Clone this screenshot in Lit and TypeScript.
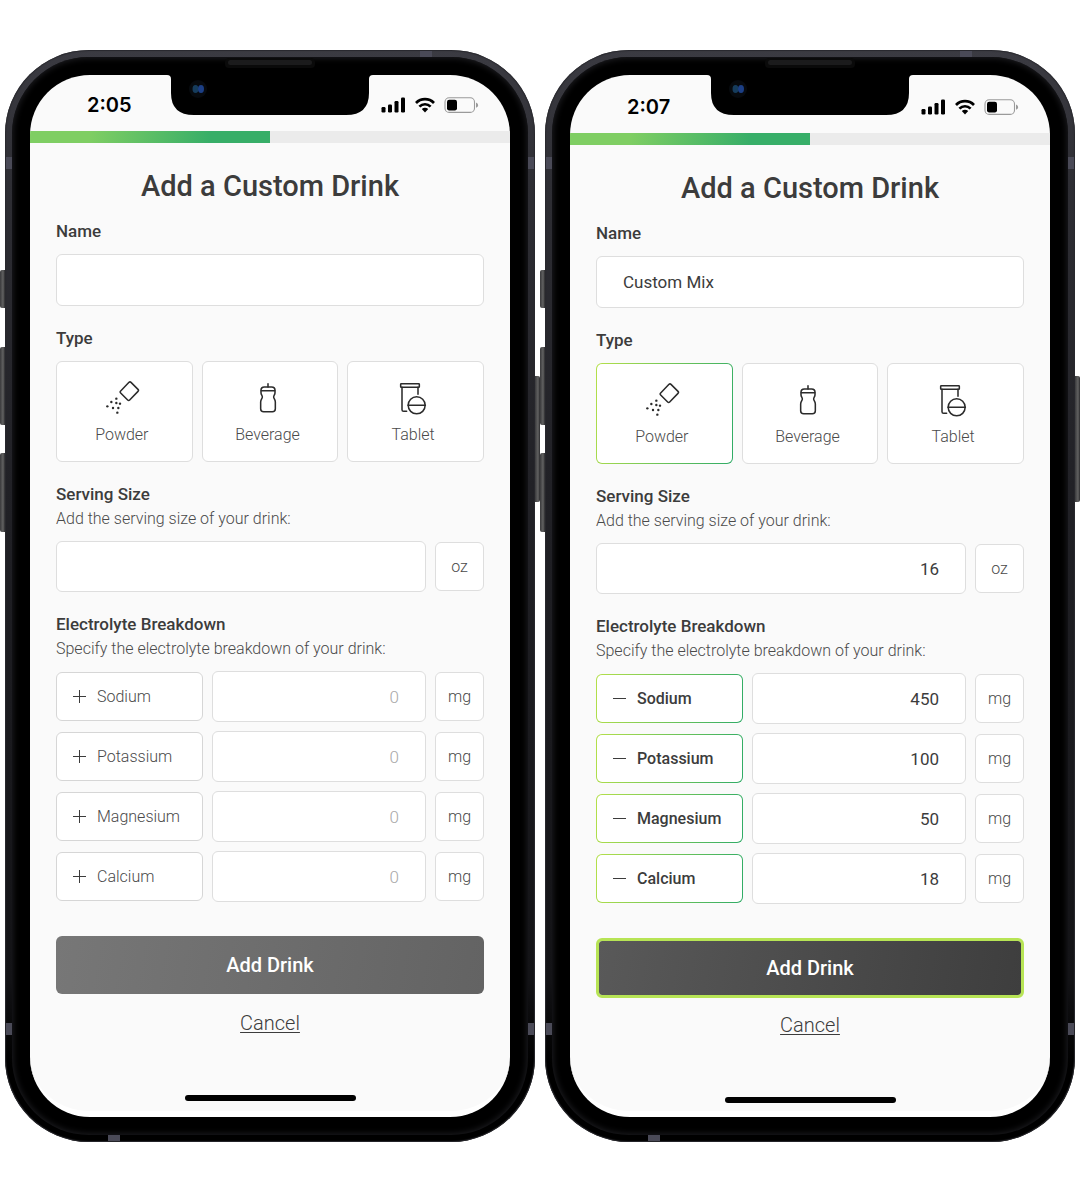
import { LitElement, html, svg, css, nothing } from "lit";
import { customElement, property, state } from "lit/decorators.js";
import { classMap } from "lit/directives/class-map.js";

interface Mineral {
  name: string;
  amount: string;
}

interface Drink {
  time: string;
  name: string;
  type: string;
  serving: string;
  minerals: Mineral[];
}

const emptyDrink: Drink = {
  time: "2:05",
  name: "",
  type: "",
  serving: "",
  minerals: [
    { name: "Sodium", amount: "" },
    { name: "Potassium", amount: "" },
    { name: "Magnesium", amount: "" },
    { name: "Calcium", amount: "" },
  ],
};

const filledDrink: Drink = {
  time: "2:07",
  name: "Custom Mix",
  type: "Powder",
  serving: "16",
  minerals: [
    { name: "Sodium", amount: "450" },
    { name: "Potassium", amount: "100" },
    { name: "Magnesium", amount: "50" },
    { name: "Calcium", amount: "18" },
  ],
};

const powderDots = [
  [200, 146], [185, 156], [200, 159], [211, 161],
  [173, 169], [190, 174], [206, 174], [203, 188],
];

const types = [
  {
    name: "Powder",
    box: "163 90 108 108",
    art: svg`
      <path d="M238 97 Q241 94 244 97 L265 118 Q268 121 265 124 L240 150 Q237 153 234 150 L213 129 Q210 126 213 123 Z"/>
      ${powderDots.map(([x, y]) => svg`<circle class="dot" cx=${x} cy=${y} r="3.6"/>`)}`,
  },
  {
    name: "Beverage",
    box: "599 90 108 108",
    art: svg`
      <path d="M656 101 V111 M636 122 H676"/>
      <path d="M635 128 V121 Q635 111 645 111 H667 Q677 111 677 121 V128 C677 135 673 136 673 141 C673 146 678 148 678 156 V176 Q678 185 669 185 H643 Q634 185 634 176 V156 C634 148 639 146 639 141 C639 136 635 135 635 128 Z"/>`,
  },
  {
    name: "Tablet",
    box: "1036 90 108 108",
    art: svg`
      <rect x="1053" y="101" width="56" height="11" rx="2"/>
      <path d="M1057 112 V179 Q1057 184 1062 184 H1071 M1105 112 V133"/>
      <circle cx="1101" cy="166" r="25.5"/>
      <path d="M1075 166 H1127"/>`,
  },
];

@customElement("drink-form")
export class DrinkForm extends LitElement {
  @property({ attribute: false }) drink: Drink = emptyDrink;
  @state() private picked: string | null = null;

  static styles = css`
    :host {
      display: block;
      color: #3c3c3c;
      font-family: Roboto, "Liberation Sans", sans-serif;
    }
    *, *::before {
      box-sizing: border-box;
    }
    .progress {
      height: 12px;
      background: #ebebeb;
    }
    .progress-fill {
      height: 100%;
      width: 50%;
      background: linear-gradient(100deg, #7fce63 25%, #37ae68 75%);
    }
    .form {
      display: flex;
      flex-direction: column;
      padding: 25px 26px 0;
    }
    .title {
      margin: 0 0 15px;
      font-size: 29px;
      line-height: 36px;
      font-weight: 500;
      text-align: center;
    }
    .group {
      display: flex;
      flex-direction: column;
      min-width: 0;
      margin: 0 0 20px;
      padding: 0;
      border: 0;
    }
    .label {
      display: block;
      padding: 0;
      font-size: 17px;
      line-height: 24px;
      font-weight: 500;
    }
    .hint {
      margin: 0;
      padding-top: 1px;
      color: #4a4a4a;
      font-size: 16px;
      line-height: 24px;
      font-weight: 300;
    }
    .body {
      margin-top: 11px;
    }
    .hint + .body {
      margin-top: 10px;
    }
    .text {
      display: block;
      flex: 1;
      width: 100%;
      min-width: 0;
      height: 51px;
      margin: 0;
      padding: 0 26px;
      border: 1px solid #dedede;
      border-radius: 6px;
      background: #fff;
      color: #3c3c3c;
      font: 400 17px/24px Roboto, "Liberation Sans", sans-serif;
      outline: 0;
    }
    .wide {
      height: 52px;
    }
    .number {
      text-align: right;
    }
    .text::placeholder {
      color: #a8a8a8;
      font-weight: 300;
      opacity: 1;
    }
    .cards {
      display: grid;
      grid-template-columns: repeat(3, minmax(0, 1fr));
      gap: 9px;
    }
    .card {
      display: flex;
      flex-direction: column;
      align-items: center;
      gap: 7px;
      padding: 18px 5px 14px 0;
      border: 1px solid #dedede;
      border-radius: 6px;
      background: #fff;
      color: #4a4a4a;
      font-size: 16px;
      line-height: 24px;
      font-weight: 300;
      cursor: pointer;
    }
    .radio {
      position: absolute;
      width: 1px;
      height: 1px;
      margin: 0;
      opacity: 0;
    }
    .card-icon {
      width: 36px;
      height: 36px;
      fill: none;
      stroke: #2b2b2b;
      stroke-width: 4.6;
      stroke-linecap: round;
      stroke-linejoin: round;
    }
    .dot {
      fill: #2b2b2b;
      stroke: none;
    }
    .row {
      display: flex;
      align-items: center;
      gap: 9px;
    }
    .rows {
      display: flex;
      flex-direction: column;
      gap: 9px;
    }
    .unit {
      flex: none;
      width: 49px;
      height: 49px;
      border: 1px solid #dedede;
      border-radius: 6px;
      background: #fff;
      color: #4a4a4a;
      font-size: 16px;
      line-height: 48px;
      font-weight: 300;
      text-align: center;
    }
    .toggle {
      display: flex;
      flex: none;
      align-items: center;
      gap: 10px;
      width: 147px;
      height: 49px;
      margin: 0;
      padding: 0 16px;
      border: 1px solid #d6d6d6;
      border-radius: 6px;
      background: #fff;
      color: #4a4a4a;
      font: 300 16px/24px Roboto, "Liberation Sans", sans-serif;
      cursor: pointer;
    }
    .toggle.on {
      color: #3c3c3c;
      font-weight: 500;
    }
    .card.on, .toggle.on {
      border-color: transparent;
      background:
        linear-gradient(#fff, #fff) padding-box,
        linear-gradient(100deg, #b5e04a, #2fab66) border-box;
    }
    .sign {
      width: 14px;
      height: 14px;
      fill: none;
      stroke: #3c3c3c;
      stroke-width: 1;
    }
    .actions {
      display: flex;
      flex-direction: column;
      align-items: center;
      gap: 17px;
      margin-top: 14px;
    }
    .submit {
      width: 100%;
      height: 58px;
      margin: 0;
      border: 0;
      border-radius: 6px;
      background: linear-gradient(100deg, #777, #636363);
      color: #fff;
      font: 500 20px/24px Roboto, "Liberation Sans", sans-serif;
    }
    .actions.ready {
      gap: 15px;
    }
    .ready .submit {
      height: 60px;
      border: 3px solid #b7e455;
      background: linear-gradient(100deg, #595959, #3e3e3e) padding-box;
      cursor: pointer;
    }
    .cancel {
      color: #3c3c3c;
      font-size: 20px;
      line-height: 24px;
      font-weight: 300;
      text-underline-offset: 2px;
      text-decoration-thickness: 1px;
    }
  `;

  private field(id: string, value: string, placeholder: string, label?: string) {
    return html`<input class="text number" id=${id} type="text" inputmode="numeric"
      aria-label=${label ?? nothing} placeholder=${placeholder} .value=${value} />`;
  }

  private card(type: (typeof types)[number]) {
    const on = (this.picked ?? this.drink.type) === type.name;
    return html`
      <label class=${classMap({ card: true, on })}>
        <input class="radio" type="radio" name="type" .checked=${on}
          @change=${() => (this.picked = type.name)} />
        <svg class="card-icon" viewBox=${type.box} aria-hidden="true">${type.art}</svg>
        <span>${type.name}</span>
      </label>`;
  }

  private mineral(item: Mineral) {
    const on = item.amount !== "";
    return html`
      <div class="row">
        <button type="button" class=${classMap({ toggle: true, on })} aria-pressed=${on}>
          <svg class="sign" viewBox="0 0 14 14" aria-hidden="true">
            <path d=${on ? "M0 6.5H13" : "M0 6.5H13M6.5 0V13"} />
          </svg>
          <span>${item.name}</span>
        </button>
        ${this.field(item.name, item.amount, "0", item.name)}
        <span class="unit">mg</span>
      </div>`;
  }

  render() {
    const { drink } = this;
    const ready = drink.name !== "";
    return html`
      <div class="progress"><div class="progress-fill"></div></div>
      <form class="form" @submit=${(e: Event) => e.preventDefault()}>
        <h1 class="title">Add a Custom Drink</h1>
        <div class="group">
          <label class="label" for="name">Name</label>
          <div class="body"><input class="text wide" id="name" type="text" .value=${drink.name} /></div>
        </div>
        <fieldset class="group">
          <legend class="label">Type</legend>
          <div class="cards body">${types.map((t) => this.card(t))}</div>
        </fieldset>
        <div class="group">
          <label class="label" for="serving">Serving Size</label>
          <p class="hint">Add the serving size of your drink:</p>
          <div class="row body">
            ${this.field("serving", drink.serving, "")}
            <span class="unit">oz</span>
          </div>
        </div>
        <fieldset class="group">
          <legend class="label">Electrolyte Breakdown</legend>
          <p class="hint">Specify the electrolyte breakdown of your drink:</p>
          <div class="rows body">${drink.minerals.map((m) => this.mineral(m))}</div>
        </fieldset>
        <div class=${classMap({ actions: true, ready })}>
          <button class="submit" type="submit" ?disabled=${!ready}>Add Drink</button>
          <a class="cancel" href="#">Cancel</a>
        </div>
      </form>`;
  }
}

@customElement("phone-frame")
export class PhoneFrame extends LitElement {
  @property() time = "";
  @property({ type: Boolean, reflect: true }) lowered = false;

  static styles = css`
    :host {
      display: block;
      --drop: 0px;
    }
    :host([lowered]) {
      --drop: 2px;
    }
    * {
      box-sizing: border-box;
    }
    .phone {
      position: relative;
      padding: 7px;
      border-radius: 84px;
      background: linear-gradient(#3b3b42, #2e2e34 12%, #212126 40%, #131316 85%, #000 93%);
      box-shadow: inset 0 0 1px 1px #29292e;
    }
    .bezel {
      padding: 18px;
      border-radius: 77px;
      background: #000;
      box-shadow: inset 0 0 6px 1px #1f1f23;
    }
    .screen {
      display: flex;
      flex-direction: column;
      overflow: hidden;
      border-radius: 60px;
      border-bottom: 6px solid #fff;
      background: #fafafa;
    }
    .status {
      display: flex;
      align-items: center;
      justify-content: space-between;
      height: calc(56px + var(--drop));
      padding: calc(4px + var(--drop)) 31px 0 57px;
      font: 600 20px/24px Inter, "Liberation Sans", sans-serif;
      color: #000;
    }
    .signals {
      display: flex;
      gap: 9px;
    }
    .home {
      align-self: center;
      width: 171px;
      height: 6px;
      margin: 60px 0 calc(10px - var(--drop));
      border-radius: 3px;
      background: #000;
    }
    .notch {
      position: absolute;
      top: 4px;
      left: 50%;
      width: 206px;
      height: 62px;
      margin-left: -103px;
    }
    .key {
      position: absolute;
      left: -5px;
      width: 5px;
      border-radius: 2px 0 0 2px;
      background: linear-gradient(90deg, #3a3a3c, #626262 60%, #2a2a2c);
    }
    .mute { top: 220px; height: 38px; }
    .up { top: 297px; height: 78px; }
    .down { top: 403px; height: 79px; }
    .power {
      top: 326px;
      right: -5px;
      left: auto;
      height: 126px;
      border-radius: 0 2px 2px 0;
    }
    .band {
      position: absolute;
      width: 6px;
      height: 12px;
      background: #4a4a57;
    }
    .left { left: 1px; }
    .right { right: 1px; }
    .high { top: 107px; }
    .low { bottom: 107px; }
    .flat { width: 12px; height: 6px; }
    .above { top: 1px; right: 103px; }
    .below { bottom: 1px; left: 103px; }
  `;

  render() {
    return html`
      <div class="phone">
        <span class="key mute"></span><span class="key up"></span>
        <span class="key down"></span><span class="key power"></span>
        <div class="bezel">
          <div class="screen">
            <div class="status">
              <span>${this.time}</span>
              <span class="signals">
                <svg width="25" height="16" viewBox="0 0 25 16" aria-hidden="true">
                  <rect x="0.5" y="10" width="4" height="5.5" rx="1.2"/>
                  <rect x="7" y="7.5" width="4" height="8" rx="1.2"/>
                  <rect x="13.5" y="4" width="4" height="11.5" rx="1.2"/>
                  <rect x="20" y="0.5" width="4" height="15" rx="1.2"/>
                </svg>
                <svg width="20" height="16" viewBox="0 0 20 16" aria-hidden="true">
                  <g fill="none" stroke="#000" stroke-width="2.7">
                    <path d="M1 6 A12.6 12.6 0 0 1 19 6"/>
                    <path d="M4.4 9.6 A7.8 7.8 0 0 1 15.6 9.6"/>
                  </g>
                  <path d="M6.8 12 Q10 9.4 13.2 12 L10 15.4 Z"/>
                </svg>
                <svg width="35" height="16" viewBox="0 0 35 16" aria-hidden="true">
                  <rect x="1" y="0.8" width="29.5" height="14.6" rx="4.2" fill="none" stroke="#9a9a9a" stroke-width="1.1"/>
                  <rect x="3" y="2.8" width="10" height="10.6" rx="2.2"/>
                  <path d="M32 5.6 Q34.4 6.6 34.2 8.2 Q34.2 9.8 32 10.8 Z" fill="#9a9a9a"/>
                </svg>
              </span>
            </div>
            <slot></slot>
            <span class="home"></span>
          </div>
        </div>
        <svg class="notch" viewBox="0 0 206 62" aria-hidden="true">
          <path d="M0 20 V21 Q4 21 4 25 V39 Q4 61 27 61 H179 Q202 61 202 39 V25 Q202 21 206 21 V20 Z"/>
          <rect x="58" y="4" width="90" height="10" rx="4" fill="#0a0a0a"/>
          <rect x="61" y="6" width="84" height="5" rx="2.5" fill="#1b1b1c"/>
          <circle cx="31" cy="35" r="9" fill="#070a0e"/>
          <ellipse cx="28.5" cy="35" rx="3" ry="4" fill="#163c5c"/>
          <ellipse cx="34" cy="35" rx="3" ry="4" fill="#1c3f86"/>
        </svg>
        <span class="band left high"></span><span class="band right high"></span>
        <span class="band left low"></span><span class="band right low"></span>
        <span class="band flat above"></span><span class="band flat below"></span>
      </div>`;
  }
}

@customElement("app-root")
export class AppRoot extends LitElement {
  static styles = css`
    :host {
      display: block;
      background: #fff;
      overflow: hidden;
    }
    .stage {
      display: grid;
      grid-template-columns: repeat(2, minmax(0, 1fr));
      gap: 10px;
      padding: 50px 5px 44px;
    }
  `;

  render() {
    return html`
      <main class="stage">
        <phone-frame time=${emptyDrink.time}><drink-form .drink=${emptyDrink}></drink-form></phone-frame>
        <phone-frame time=${filledDrink.time} lowered><drink-form .drink=${filledDrink}></drink-form></phone-frame>
      </main>`;
  }
}
